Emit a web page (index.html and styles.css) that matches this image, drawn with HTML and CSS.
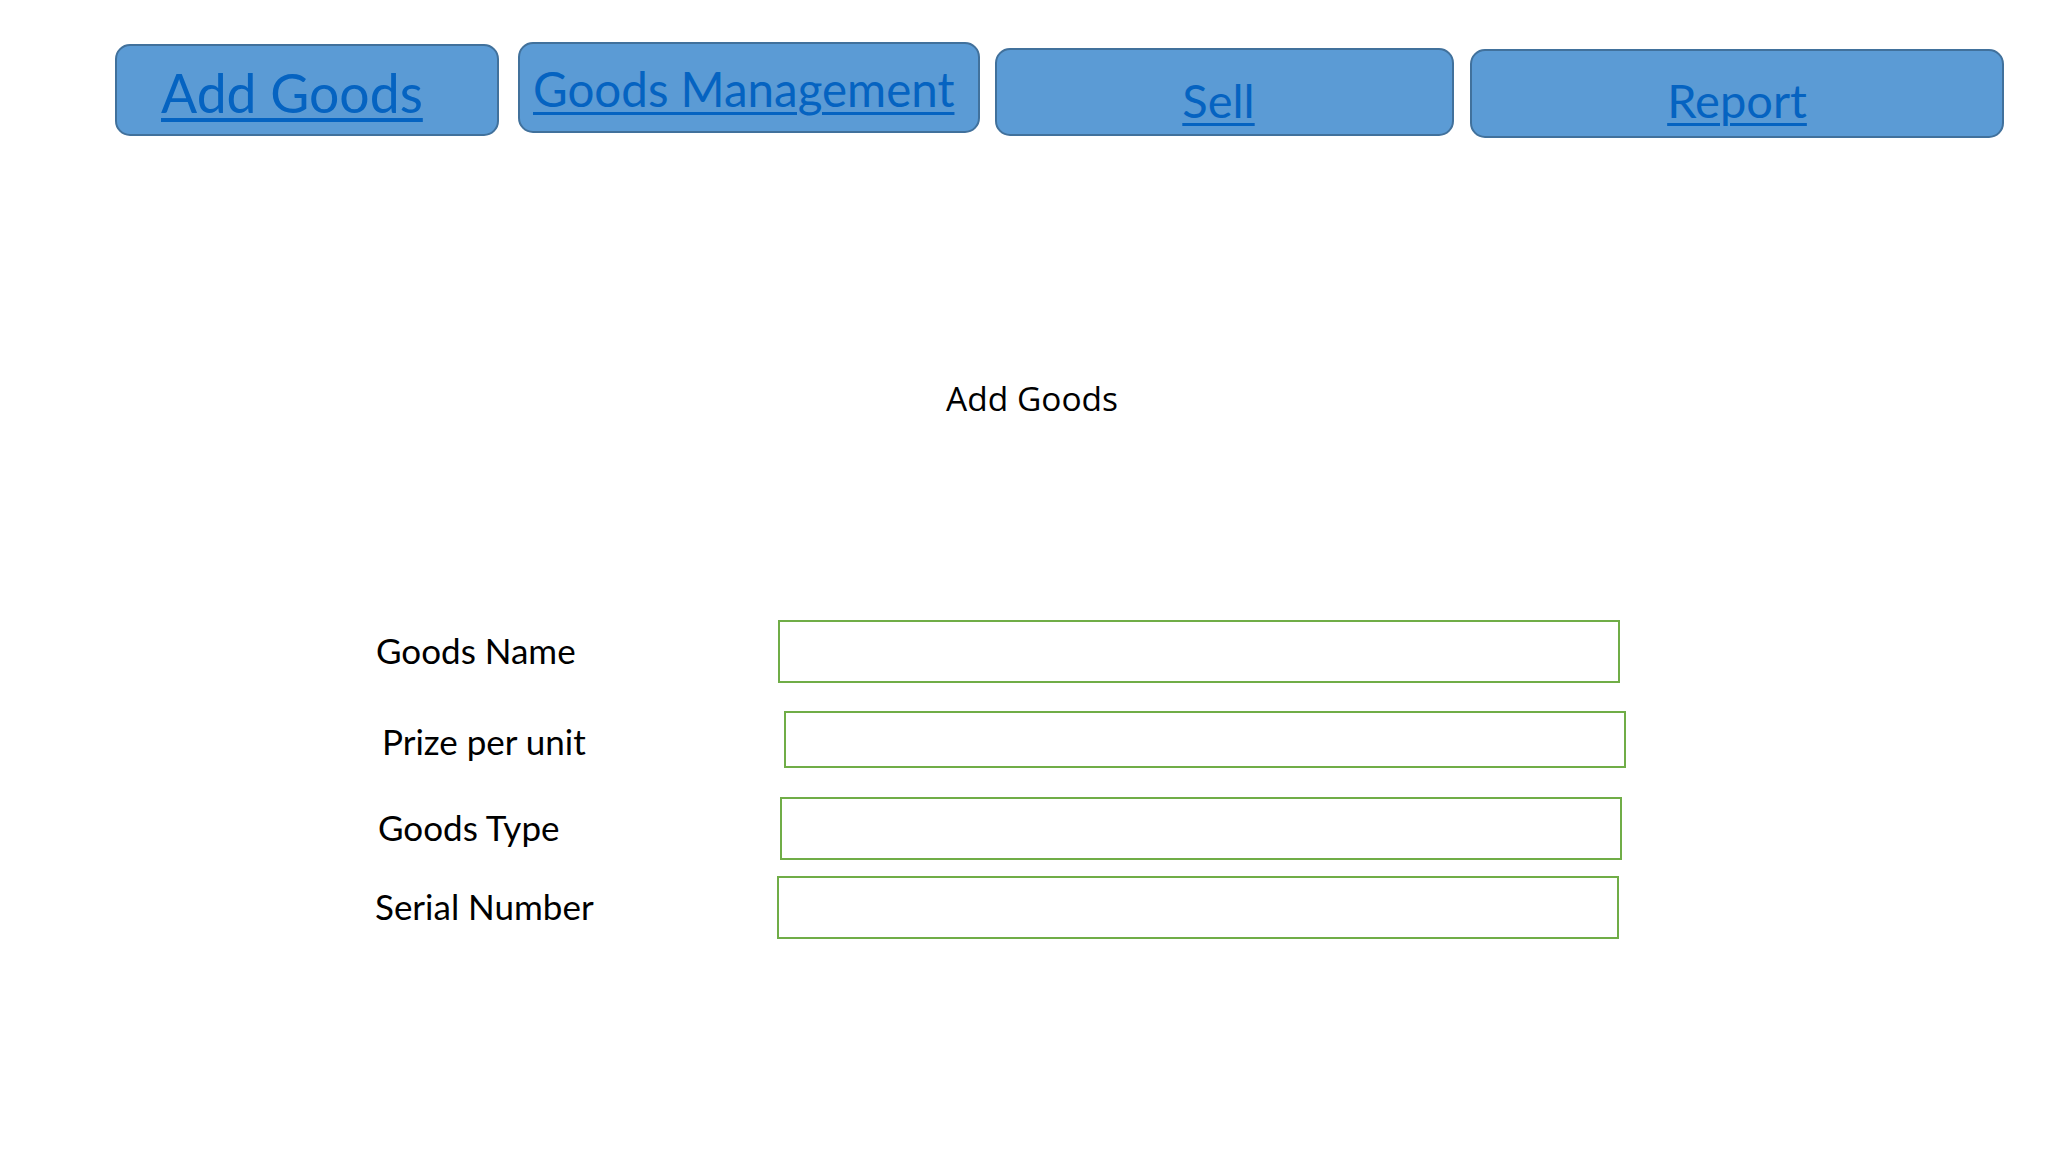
FILE: index.html
```html
<!DOCTYPE html>
<html lang="en">
<head>
<meta charset="utf-8">
<title>Add Goods</title>
<link rel="stylesheet" href="styles.css">
</head>
<body>
<nav class="nav">
  <div class="tab tab-add"><a href="#" class="tab-link tab-link-big">Add Goods</a></div>
  <div class="tab tab-manage"><a href="#" class="tab-link tab-link-wide">Goods Management</a></div>
  <div class="tab tab-sell"><a href="#" class="tab-link">Sell</a></div>
  <div class="tab tab-report"><a href="#" class="tab-link">Report</a></div>
</nav>
<h1 class="title">Add Goods</h1>
<form class="form">
  <div class="row row-1"><label class="label">Goods Name</label><input class="field" type="text"></div>
  <div class="row row-2"><label class="label">Prize per unit</label><input class="field field-short" type="text"></div>
  <div class="row row-3"><label class="label">Goods Type</label><input class="field" type="text"></div>
  <div class="row row-4"><label class="label">Serial Number</label><input class="field" type="text"></div>
</form>
</body>
</html>
```
FILE: styles.css
```css
html, body {
  margin: 0;
  padding: 0;
  background: #ffffff;
}
body {
  width: 2048px;
  height: 1152px;
  overflow: hidden;
  font-family: Lato, "Open Sans", sans-serif;
  color: #000;
}
.nav {
  display: flex;
  align-items: flex-start;
  padding-left: 115px;
}
.tab {
  box-sizing: border-box;
  background: #5b9bd5;
  border: 2px solid #41719c;
  border-radius: 15px;
  display: flex;
  align-items: flex-start;
}
.tab-link {
  color: #0563c1;
  font-family: Lato, sans-serif;
  font-size: 47px;
  line-height: 1;
  text-decoration: underline;
  text-decoration-thickness: 3px;
  text-underline-offset: 5px;
  white-space: nowrap;
}
.tab-link-wide {
  font-size: 47.5px;
}
.tab-link-big {
  font-size: 53.5px;
  text-decoration-thickness: 4px;
  text-underline-offset: 5px;
}
.tab-add {
  width: 384px;
  height: 92px;
  margin-top: 44px;
  padding: 20px 0 0 44px;
}
.tab-manage {
  width: 462px;
  height: 91px;
  margin-top: 42px;
  margin-left: 19px;
  padding: 21px 0 0 13px;
}
.tab-sell {
  width: 459px;
  height: 88px;
  margin-top: 48px;
  margin-left: 15px;
  padding: 27px 12px 0 0;
  justify-content: center;
}
.tab-report {
  width: 534px;
  height: 89px;
  margin-top: 49px;
  margin-left: 16px;
  padding-top: 26px;
  justify-content: center;
}
.title {
  margin: 244px 0 0 0;
  padding-left: 16px;
  text-align: center;
  font-family: "Open Sans", sans-serif;
  font-weight: 400;
  font-size: 33.5px;
  line-height: 1;
}
.form {
  margin-top: 204px;
}
.row {
  display: flex;
  align-items: flex-start;
}
.label {
  box-sizing: border-box;
  width: 402px;
  padding-top: 13px;
  font-size: 35px;
  line-height: 1;
}
.field {
  box-sizing: border-box;
  width: 842px;
  height: 63px;
  margin: 0;
  border: 2.5px solid #70ad47;
  background: #fff;
  outline: none;
}
.field-short {
  height: 57px;
}
.row-1 { margin-left: 376px; }
.row-2 { margin-left: 382px; margin-top: 28px; }
.row-3 { margin-left: 378px; margin-top: 29px; }
.row-4 { margin-left: 375px; margin-top: 16px; }
```
